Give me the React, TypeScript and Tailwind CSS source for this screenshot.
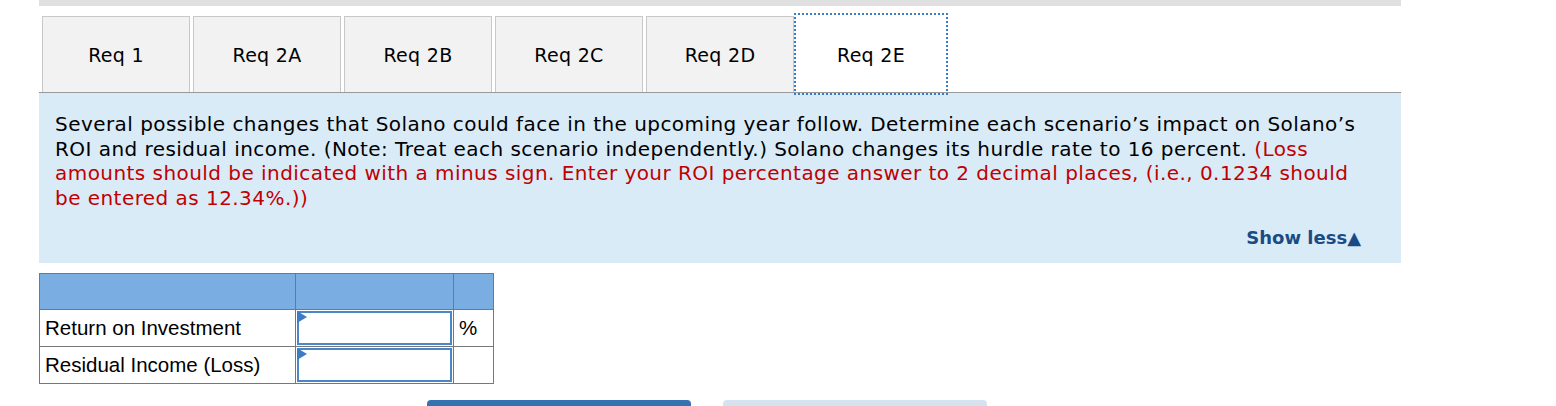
const tabs = ['Req 1', 'Req 2A', 'Req 2B', 'Req 2C', 'Req 2D', 'Req 2E'];

function Tab({ label, active }: { label: string; active: boolean }) {
  return (
    <div
      className={
        active
          ? 'flex h-[76px] w-[148px] items-center justify-center bg-white pt-[2px] text-[19px] tracking-[0.3px] text-black outline-2 outline-offset-1 outline-dotted outline-[#3b7cc4]'
          : 'flex h-[76px] w-[148px] items-center justify-center border border-b-0 border-[#c8c8c8] bg-[#f2f2f2] pt-[2px] text-[19px] tracking-[0.3px] text-black'
      }
    >
      {label}
    </div>
  );
}

function InputCell() {
  return (
    <td className="border border-[#777] p-0">
      <div className="relative mx-px h-[34px] border-2 border-[#4a86c8] bg-white">
        <div className="absolute left-[-2px] top-[-2px] h-0 w-0 border-y-[6px] border-l-[10px] border-y-transparent border-l-[#3b7cc4]" />
      </div>
    </td>
  );
}

export default function App() {
  return (
    <div className="h-[406px] w-[1556px] overflow-hidden bg-white" style={{ fontFamily: '"DejaVu Sans", Verdana, sans-serif' }}>
      <div className="ml-[39px] w-[1362px]">
        <div className="h-[6px] bg-[#e0e0e0]" />

        <div className="mt-[10px] flex gap-[3px] pl-[3px]">
          {tabs.map((t, i) => (
            <Tab key={t} label={t} active={i === 5} />
          ))}
        </div>
        <div className="h-px bg-[#999]" />

        <div className="bg-[#daebf8] pb-[13px] pl-[16px] pr-[40px] pt-[19px]">
          <p className="text-[20px] leading-[24.5px] tracking-[0.45px] text-black">
            Several possible changes that Solano could face in the upcoming year follow. Determine each scenario’s impact on Solano’s
            ROI and residual income. (Note: Treat each scenario independently.) Solano changes its hurdle rate to 16 percent.{' '}
            <span className="text-[#c00000]">
              (Loss amounts should be indicated with a minus sign. Enter your ROI percentage answer to 2 decimal places, (i.e., 0.1234 should
              be entered as 12.34%.))
            </span>
          </p>
          <div className="mt-[16px] flex justify-end">
            <span className="text-[18px] font-bold leading-[24px] text-[#1a4b85]">Show less▲</span>
          </div>
        </div>

        <table
          className="mt-[10px] w-[455px] border-collapse text-[20.5px] text-black"
          style={{ fontFamily: '"Liberation Sans", Arial, sans-serif' }}
        >
          <tbody>
            <tr className="h-[36px] bg-[#7aade2]">
              <td className="w-[256px] border border-[#777]" />
              <td className="w-[158px] border border-[#777]" />
              <td className="w-[40px] border border-[#777]" />
            </tr>
            <tr className="h-[37px]">
              <td className="border border-[#777] pl-[5px]">Return on Investment</td>
              <InputCell />
              <td className="border border-[#777] pl-[5px]">%</td>
            </tr>
            <tr className="h-[37px]">
              <td className="border border-[#777] pl-[5px]">Residual Income (Loss)</td>
              <InputCell />
              <td className="border border-[#777]" />
            </tr>
          </tbody>
        </table>

        <div className="mt-[16px] flex gap-[32px] pl-[388px]">
          <div className="h-[30px] w-[264px] rounded-t-[4px] bg-[#3572b0]" />
          <div className="h-[30px] w-[264px] rounded-t-[4px] bg-[#d5e3f1]" />
        </div>
      </div>
    </div>
  );
}
